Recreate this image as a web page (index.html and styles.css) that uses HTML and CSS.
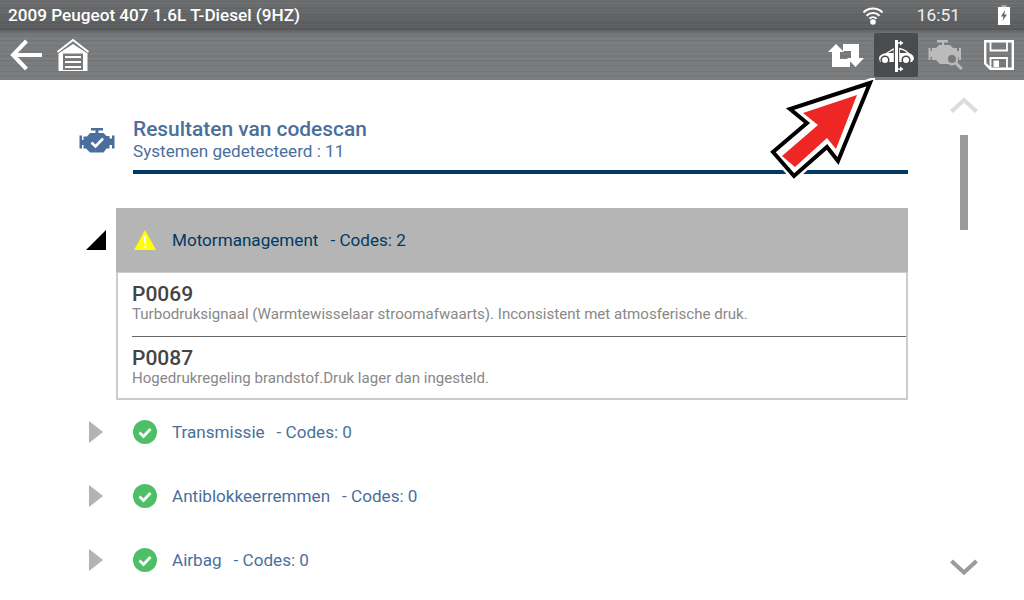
FILE: index.html
```html
<!DOCTYPE html>
<html lang="nl">
  <head>
    <meta charset="UTF-8" />
    <title>Resultaten van codescan</title>
    <link rel="stylesheet" href="styles.css">
  </head>
  <body>
    <header class="statusbar">
      <span class="vehicle">2009 Peugeot 407 1.6L T-Diesel (9HZ)</span>
      <div class="status-right">
        <svg class="icon-wifi" width="24" height="20" viewBox="0 0 24 20">
          <path d="M2.500 7.500a13.500 13.500 0 0 1 19 0M5.500 10.800a9.200 9.200 0 0 1 13 0M8.500 13.700a5 5 0 0 1 7 0" fill="none" stroke="#fff" stroke-width="2" />
          <circle cx="12" cy="17" r="2.800" fill="#fff" />
        </svg>
        <span class="clock">16:51</span>
        <svg class="icon-battery" width="12" height="20" viewBox="0 0 12 20">
          <path d="M0 2h12v18H0z" fill="#fff" />
          <path d="M3.500 0h5v2h-5z" fill="#a8a8a8" />
          <path d="M7 5 3 11.500h2.500L4.500 16 9 9.500H6.300z" fill="#666" />
        </svg>
      </div>
    </header>

    <nav class="toolbar">
      <div class="tools-left">
        <button class="tool">
          <svg width="36" height="36" viewBox="0 0 36 36">
            <path d="M34 18H5M18.500 4 5 18l13.500 14" fill="none" stroke="#fff" stroke-width="4" />
          </svg>
        </button>
        <button class="tool">
          <svg width="34" height="34" viewBox="0 0 34 34">
            <path d="M1.500 14 17 2l15.500 12" fill="none" stroke="#fff" stroke-width="2" />
            <path d="M2.500 15.500 17 6l14.500 9.500V33h-4.500V15.500H7V33H2.500z" fill="#fff" />
            <path d="M9 18h16v2H9zM9 23h16v2H9zM9 28h16v2H9z" fill="#fff" />
            <path d="M7 32h20v1H7z" fill="#fff" />
          </svg>
        </button>
      </div>
      <div class="tools-right">
        <button class="tool">
          <svg width="36" height="25" viewBox="0 0 36 25">
            <path d="M8 1 16 9h-4v7h10v8H4V9H0z" fill="#fff" />
            <path d="M15 1h16v14h5l-8.500 9-8.500-9h4V8h-8z" fill="#fff" />
          </svg>
        </button>
        <button class="tool tool-active">
          <svg width="44" height="44" viewBox="0 0 44 44">
            <path d="M5 25.500c0-3 3-4.500 7-5.500l7-4.500c5-1.500 11-.5 16 4.500 3 1 5 3 5 6l-2 3H6z" fill="#fff" />
            <path d="M14 20l5.500-3v3zM26 16.800c3 .2 5 1.400 7 3.200h-7z" fill="#4a4b4d" />
            <circle cx="11" cy="27" r="4.600" fill="#4a4b4d" />
            <circle cx="11" cy="27" r="3" fill="#fff" />
            <circle cx="32" cy="27" r="4.600" fill="#4a4b4d" />
            <circle cx="32" cy="27" r="3" fill="#fff" />
            <path d="M19.800 7h5.400v32h-5.400z" fill="#4a4b4d" />
            <path d="M21 7h3v32h-3z" fill="#fff" />
            <path d="M24 10h2M24 36h2" stroke="#fff" stroke-width="1.500" />
            <path d="M26 7.500l3.500 2.500-3.500 2.500zM26 33.500l3.500 2.500-3.500 2.500z" fill="#fff" />
          </svg>
        </button>
        <button class="tool">
          <svg width="36" height="30" viewBox="0 0 36 30">
            <path d="M9 0h11v2.500h-4V5h6l3 3h4v3h2V8h2v12h-2v-3h-2v3h-3l-3 4H12l-4-4H4v-3H2.500v3H.500V8h2v3H4V8h4l3-3h3V2.500H9z" fill="#bbbbbb" />
            <circle cx="24" cy="19" r="5.200" fill="#77797b" stroke="#bbbbbb" stroke-width="2.400" />
            <path d="M27.800 23l6 6" stroke="#bbbbbb" stroke-width="3" />
          </svg>
        </button>
        <button class="tool tool-save">
          <svg width="30" height="30" viewBox="0 0 30 30">
            <path d="M1.200 1.200h27.600v27.600H6.500l-5.300-5.300z" fill="none" stroke="#fff" stroke-width="2.400" />
            <path d="M6.500 2v8.500h16.500V2" fill="none" stroke="#fff" stroke-width="1.800" />
            <path d="M6.500 29V18h16.500v11" fill="none" stroke="#fff" stroke-width="1.800" />
            <path d="M9.500 20.500h5.500v6.500H9.500z" fill="#fff" />
          </svg>
        </button>
      </div>
    </nav>

    <main class="page">
      <section class="content">
        <div class="title-block">
          <svg class="title-icon" width="36" height="28" viewBox="0 0 36 28">
            <path d="M12 1h12v2.500h-4.500V6h5l3 3h3v2.500H33V8.500h2.500v13H33V18h-2.500v3.500h-3l-3 4H11l-4-4H4.500V18H3v3.500H.500v-13H3V13h1.500V9.500H8L11 6h5.500V3.500H12z" fill="#4a6f9c" />
            <path d="M12.500 15.500l4 4 7.500-8" fill="none" stroke="#fff" stroke-width="2.600" />
          </svg>
          <div class="title-text">
            <h1>Resultaten van codescan</h1>
            <p>Systemen gedetecteerd : 11</p>
          </div>
        </div>

        <div class="system">
          <div class="row">
            <span class="expander"><span class="tri-open"></span></span>
            <div class="row-head row-head-open">
              <svg class="status-icon" width="24" height="22" viewBox="0 0 24 22">
                <path d="M12 1 23 21H1z" fill="#ffff00" />
                <path d="M10.800 7h2.400l-.4 8h-1.600zM10.800 16.500h2.400V19h-2.400z" fill="#fff" />
              </svg>
              <span class="sys-name">Motormanagement</span>
              <span class="sys-codes">- Codes: 2</span>
            </div>
          </div>
          <div class="codes">
            <div class="code">
              <h3>P0069</h3>
              <p>Turbodruksignaal (Warmtewisselaar stroomafwaarts). Inconsistent met atmosferische druk.</p>
            </div>
            <div class="code">
              <h3>P0087</h3>
              <p>Hogedrukregeling brandstof.Druk lager dan ingesteld.</p>
            </div>
          </div>
        </div>

        <div class="row">
          <span class="expander"><span class="tri-closed"></span></span>
          <div class="row-head">
            <svg class="status-icon" width="24" height="24" viewBox="0 0 24 24">
              <circle cx="12" cy="12" r="12" fill="#4fbf67" />
              <path d="M6.500 12.500l4 4 7-7.500" fill="none" stroke="#fff" stroke-width="2.800" />
            </svg>
            <span class="sys-name">Transmissie</span>
            <span class="sys-codes">- Codes: 0</span>
          </div>
        </div>
        <div class="row">
          <span class="expander"><span class="tri-closed"></span></span>
          <div class="row-head">
            <svg class="status-icon" width="24" height="24" viewBox="0 0 24 24">
              <circle cx="12" cy="12" r="12" fill="#4fbf67" />
              <path d="M6.500 12.500l4 4 7-7.500" fill="none" stroke="#fff" stroke-width="2.800" />
            </svg>
            <span class="sys-name">Antiblokkeerremmen</span>
            <span class="sys-codes">- Codes: 0</span>
          </div>
        </div>
        <div class="row">
          <span class="expander"><span class="tri-closed"></span></span>
          <div class="row-head">
            <svg class="status-icon" width="24" height="24" viewBox="0 0 24 24">
              <circle cx="12" cy="12" r="12" fill="#4fbf67" />
              <path d="M6.500 12.500l4 4 7-7.500" fill="none" stroke="#fff" stroke-width="2.800" />
            </svg>
            <span class="sys-name">Airbag</span>
            <span class="sys-codes">- Codes: 0</span>
          </div>
        </div>
      </section>

      <aside class="scroller">
        <svg width="30" height="18" viewBox="0 0 30 18">
          <path d="M2.500 15.500 15 4l12.500 11.500" fill="none" stroke="#dcdcdc" stroke-width="4" />
        </svg>
        <div class="thumb"></div>
        <svg class="scroll-down" width="30" height="18" viewBox="0 0 30 18">
          <path d="M2.500 3 15 14.500 27.500 3" fill="none" stroke="#9a9a9a" stroke-width="4" />
        </svg>
      </aside>
    </main>

    <svg class="callout" width="110" height="106" viewBox="765 78 110 106">
      <path d="M870 83 790 109l17 14-34 29 21 24 33-29 11 14z" fill="#fff" stroke="#fff" stroke-width="9" />
      <path d="M870 83 790 109l17 14-34 29 21 24 33-29 11 14z" fill="#fff" stroke="#000" stroke-width="4" />
      <path d="M857 95 803 113l15 12-36 31 13 11 32-29 9 11z" fill="#ee2624" />
    </svg>
  </body>
</html>
```

FILE: styles.css
```css
* {
  margin: 0;
  padding: 0;
  box-sizing: border-box;
}
body {
  width: 1024px;
  height: 600px;
  overflow: hidden;
  background: #fff;
  font-family: Roboto, "Liberation Sans", sans-serif;
  position: relative;
}
.statusbar {
  height: 30px;
  display: flex;
  justify-content: space-between;
  align-items: center;
  padding: 0 14px 0 8px;
  color: #fff;
  background:
    repeating-linear-gradient(to bottom, rgba(255, 255, 255, 0.035) 0 1px, transparent 1px 3px),
    repeating-linear-gradient(to bottom, rgba(0, 0, 0, 0.04) 0 2px, transparent 2px 7px),
    linear-gradient(to bottom, #6c6e70, #585a5c);
}
.vehicle {
  font-size: 17.15px;
  font-weight: 500;
}
.status-right {
  display: flex;
  align-items: center;
}
.icon-wifi {
  margin-right: 32px;
}
.clock {
  font-size: 17.4px;
  margin-right: 38px;
  color: #f0f0f0;
}
.toolbar {
  height: 50px;
  display: flex;
  justify-content: space-between;
  align-items: center;
  background:
    repeating-linear-gradient(to bottom, rgba(255, 255, 255, 0.035) 0 1px, transparent 1px 4px),
    repeating-linear-gradient(to bottom, rgba(0, 0, 0, 0.04) 0 2px, transparent 2px 5px),
    linear-gradient(to bottom, #64666a 0, #797b7d 6px);
}
.tools-left {
  display: flex;
  padding-left: 7px;
}
.tools-left .tool {
  width: 38px;
}
.tools-left .tool + .tool {
  margin-left: 9px;
}
.tools-right {
  display: flex;
  align-items: center;
  gap: 6px;
  padding-right: 3px;
}
.tool {
  width: 44px;
  height: 44px;
  border: 0;
  background: none;
  display: flex;
  align-items: center;
  justify-content: center;
}
.tool-active {
  background: #4a4b4d;
  border-radius: 2px;
}
.tool-save {
  margin-left: 3px;
}
.page {
  display: flex;
  height: 520px;
  overflow: hidden;
}
.content {
  width: 908px;
}
.title-block {
  display: flex;
  align-items: flex-start;
  height: 128px;
  padding: 37px 0 0 79px;
}
.title-icon {
  margin: 10px 18px 0 0;
  flex-shrink: 0;
}
.title-text {
  flex: 1;
  height: 57px;
  border-bottom: 4px solid #003a63;
  color: #4a6f9c;
}
.title-text h1 {
  font-size: 20.9px;
  font-weight: 500;
  line-height: 25px;
}
.title-text p {
  font-size: 17.1px;
  line-height: 18px;
}
.row {
  display: flex;
  height: 64px;
}
.expander {
  width: 116px;
  flex-shrink: 0;
  display: flex;
  align-items: center;
  padding-left: 89px;
}
.tri-closed {
  width: 0;
  height: 0;
  border-left: 14px solid #b3b3b3;
  border-top: 11px solid transparent;
  border-bottom: 11px solid transparent;
}
.tri-open {
  width: 0;
  height: 0;
  margin-left: -3px;
  border-right: 20px solid #000;
  border-top: 20px solid transparent;
}
.row-head {
  flex: 1;
  display: flex;
  align-items: center;
  padding-left: 17px;
  font-size: 17.1px;
  color: #4a6f9c;
}
.row-head-open {
  background: #b5b5b5;
  color: #003a63;
}
.status-icon {
  margin-right: 15px;
  flex-shrink: 0;
}
.sys-name {
  margin-right: 12px;
}
.codes {
  margin-left: 116px;
  border: 2px solid #cccccc;
  border-top-width: 1px;
  height: 128px;
}
.code {
  height: 64px;
  margin-left: 14px;
  padding-top: 10px;
}
.code:first-child {
  border-bottom: 1px solid #666;
}
.code h3 {
  font-size: 21px;
  font-weight: 500;
  line-height: 23px;
  color: #444;
}
.code p {
  font-size: 15.07px;
  line-height: 17px;
  color: #888;
}
.scroller {
  width: 112px;
  display: flex;
  flex-direction: column;
  align-items: center;
  padding-top: 16px;
}
.thumb {
  width: 8px;
  height: 95px;
  margin-top: 21px;
  background: #9a9899;
}
.scroll-down {
  margin-top: 328px;
}
.callout {
  position: absolute;
  left: 765px;
  top: 78px;
}
```
